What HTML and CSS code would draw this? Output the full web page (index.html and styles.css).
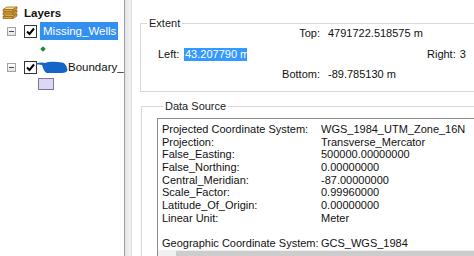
FILE: index.html
```html
<!DOCTYPE html>
<html lang="en">
<head>
  <meta charset="UTF-8">
  <title>Layer Properties</title>
  <link rel="stylesheet" href="styles.css">
</head>
<body>

<div class="window">
  <div class="toc">
    <div class="toc-head">
      <svg class="layers-icon" width="16" height="14" viewBox="0 0 16 14">
        <g stroke="#9a6a22" stroke-width="0.8" stroke-linejoin="round">
          <path d="M1 10.5 L5 8 H15 L11 10.5 Z" fill="#f7cf6a"/>
          <path d="M1 10.5 H11 V12.5 H1 Z M11 10.5 L15 8 V10 L11 12.5 Z" fill="#d9a23c"/>
          <path d="M1 7 L5 4.5 H15 L11 7 Z" fill="#f7cf6a"/>
          <path d="M1 7 H11 V9 H1 Z M11 7 L15 4.5 V6.5 L11 9 Z" fill="#d9a23c"/>
          <path d="M1 3.5 L5 1 H15 L11 3.5 Z" fill="#fbdc86"/>
          <path d="M1 3.5 H11 V5.5 H1 Z M11 3.5 L15 1 V3 L11 5.5 Z" fill="#d9a23c"/>
        </g>
      </svg>
      <span class="toc-title">Layers</span>
    </div>

    <div class="layer">
      <span class="expander"></span>
      <span class="check">
        <svg width="11" height="11" viewBox="0 0 11 11"><path d="M2 5.5 L4.5 8 L9 2.5" fill="none" stroke="#000" stroke-width="2"/></svg>
      </span>
      <span class="layer-name selected">Missing_Wells</span>
    </div>
    <div class="symbol"><span class="diamond"></span></div>

    <div class="layer">
      <span class="expander"></span>
      <span class="check">
        <svg width="11" height="11" viewBox="0 0 11 11"><path d="M2 5.5 L4.5 8 L9 2.5" fill="none" stroke="#000" stroke-width="2"/></svg>
      </span>
      <svg class="redact" width="32" height="13" viewBox="0 0 32 13">
        <path d="M0 2.5 C3 1.5 6 1 9 2 C12 0.5 20 0.5 26 1.5 C29 2 31 5 31.5 9 C31 11 29 12 26 12 L11 12 C8 11 7 7 6 4 C4 3.5 2 3.5 0 3.5 Z" fill="#1565c8"/>
      </svg>
      <span class="layer-name">Boundary_</span>
    </div>
    <div class="symbol"><span class="swatch"></span></div>
  </div>

  <div class="splitter"></div>

  <div class="props">
    <fieldset class="group extent">
      <legend>Extent</legend>
      <div class="ext-row">
        <span class="ext-label">Top:</span>
        <span>4791722.518575 m</span>
      </div>
      <div class="ext-row ext-mid">
        <span>Left:</span>
        <span class="sel">43.207790 m</span>
        <span class="ext-right">Right:</span>
        <span>3</span>
      </div>
      <div class="ext-row">
        <span class="ext-label">Bottom:</span>
        <span>-89.785130 m</span>
      </div>
    </fieldset>

    <fieldset class="group source">
      <legend>Data Source</legend>
      <div class="source-box">
        <div class="kv">
          <span>Projected Coordinate System:</span><span>WGS_1984_UTM_Zone_16N</span>
          <span>Projection:</span><span>Transverse_Mercator</span>
          <span>False_Easting:</span><span>500000.00000000</span>
          <span>False_Northing:</span><span>0.00000000</span>
          <span>Central_Meridian:</span><span>-87.00000000</span>
          <span>Scale_Factor:</span><span>0.99960000</span>
          <span>Latitude_Of_Origin:</span><span>0.00000000</span>
          <span>Linear Unit:</span><span>Meter</span>
          <span class="blank"></span><span class="blank"></span>
          <span>Geographic Coordinate System:</span><span>GCS_WGS_1984</span>
        </div>
        <div class="hscroll">
          <span class="scroll-btn"></span>
          <span class="scroll-thumb"></span>
        </div>
      </div>
    </fieldset>
  </div>
</div>

</body>
</html>
```

FILE: styles.css
```css
*, *::before, *::after {
  box-sizing: border-box;
}

body {
  margin: 0;
  font-family: "Liberation Sans", Arial, sans-serif;
  font-size: 11px;
  color: #111;
  background: #ffffff;
}

.window {
  display: flex;
  width: 474px;
  height: 256px;
  overflow: hidden;
}

/* table of contents */

.toc {
  width: 125px;
  flex: none;
  border-right: 1px solid #9f9f9f;
  background: #ffffff;
  font-size: 11.5px;
  overflow: hidden;
  white-space: nowrap;
}

.toc-head {
  display: flex;
  align-items: center;
  height: 22px;
  padding: 4px 0 0 2px;
}

.layers-icon {
  flex: none;
}

.toc-title {
  margin-left: 6px;
  font-weight: bold;
  font-size: 11.5px;
}

.layer {
  display: flex;
  align-items: center;
  height: 18px;
  padding-left: 7px;
}

.expander {
  position: relative;
  width: 9px;
  height: 9px;
  flex: none;
  border: 1px solid #a3a3a3;
  background: linear-gradient(#ffffff, #e2e2e2);
}

.expander::after {
  content: "";
  position: absolute;
  left: 1px;
  top: 3px;
  width: 5px;
  height: 1px;
  background: #3b4d6e;
}

.check {
  display: flex;
  align-items: center;
  justify-content: center;
  width: 13px;
  height: 13px;
  flex: none;
  margin-left: 8px;
  border: 1px solid #333;
  background: #fff;
}

.layer-name {
  margin-left: 3px;
  padding: 0 3px;
  line-height: 18px;
}

.layer-name.selected {
  width: 78px;
  background: #3390f0;
  color: #fff;
}

.redact {
  flex: none;
  margin-left: -1px;
}

.redact + .layer-name {
  margin-left: 0;
  padding: 0;
}

.symbol {
  display: flex;
  align-items: flex-start;
  height: 18px;
  padding-left: 38px;
}

.diamond {
  display: block;
  width: 4px;
  height: 4px;
  margin: 7px 0 0 3px;
  background: #1f8a3c;
  transform: rotate(45deg);
}

.swatch {
  display: block;
  width: 16px;
  height: 12px;
  margin-top: 2px;
  border: 1px solid #7f7798;
  background: #ddd6f6;
}

/* splitter between panes */

.splitter {
  width: 7px;
  flex: none;
  background: linear-gradient(to right, #e4e4e4, #f3f3f3);
  border-right: 1px solid #dddddd;
}

/* property pages */

.props {
  flex: 1;
  overflow: hidden;
  background: #ffffff;
}

.group {
  margin: 0 -40px 0 8px;
  padding: 0;
  border: 1px solid #d9d9d9;
  min-width: 0;
}

.group legend {
  margin-left: 6px;
  padding: 0 2px;
  line-height: 13px;
  color: #1a1a1a;
}

.extent {
  margin-top: 17px;
  padding-bottom: 10px;
}

.ext-row {
  display: grid;
  grid-template-columns: 179px auto;
  column-gap: 8px;
  line-height: 13px;
  margin-top: 7.5px;
  white-space: nowrap;
}

.ext-row:first-of-type {
  margin-top: -3px;
}

.ext-label {
  text-align: right;
}

.ext-mid {
  grid-template-columns: 26px 63px auto auto;
  column-gap: 0;
  justify-content: start;
  padding-left: 17px;
}

.sel {
  padding-left: 1px;
  background: #3399ff;
  color: #fff;
}

.ext-right {
  padding-left: 180px;
  padding-right: 4px;
}

.source {
  margin-top: 8px;
  margin-left: 9px;
  padding: 5px 0 0 15px;
}

.source-box {
  border: 1px solid #8c8c8c;
  border-right: none;
  background: #fff;
}

.kv {
  display: grid;
  grid-template-columns: 159px auto;
  line-height: 12.67px;
  padding: 4px 0 0 4px;
  white-space: nowrap;
}

.blank {
  height: 12.67px;
}

.hscroll {
  display: flex;
  height: 17px;
  background: #f0f0f0;
}

.scroll-btn {
  width: 18px;
  background: #f0f0f0;
}

.scroll-thumb {
  flex: 1;
  margin-top: 1px;
  background: #cdcdcd;
}
```
